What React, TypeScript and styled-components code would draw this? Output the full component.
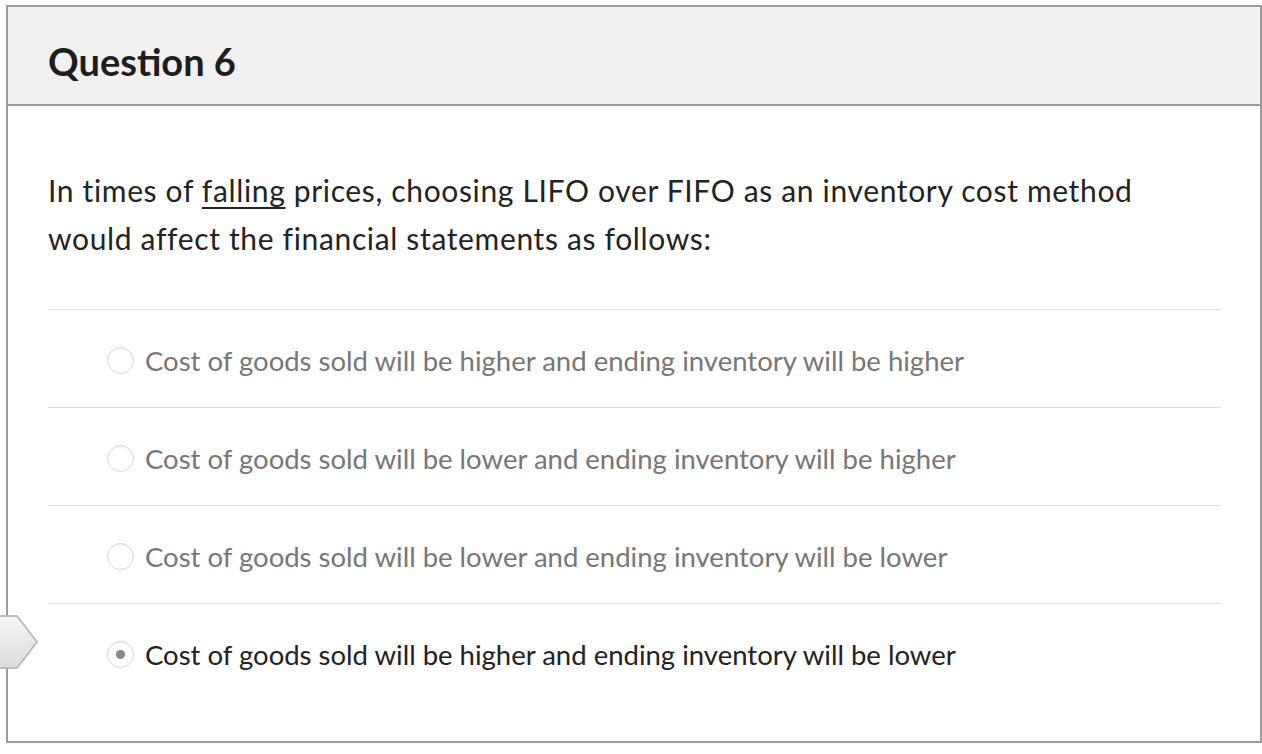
import React from 'react';
import styled, { createGlobalStyle } from 'styled-components';

const GlobalStyle = createGlobalStyle`
  body {
    margin: 0;
    background: #fff;
    font-family: Lato, "Open Sans", sans-serif;
  }
`;

const Page = styled.div`
  padding: 5px 0 0 6px;
`;

const Card = styled.div`
  box-sizing: border-box;
  width: 1256px;
  height: 738px;
  border: 2px solid #9b9b9b;
  display: flex;
  flex-direction: column;
`;

const Header = styled.div`
  box-sizing: border-box;
  height: 99px;
  display: flex;
  align-items: center;
  padding: 10px 40px 0;
  background: #f1f1f1;
  border-bottom: 2px solid #9b9b9b;
`;

const Title = styled.h2`
  margin: 0;
  font-size: 38px;
  font-weight: bold;
  color: #1e1e1e;
`;

const Body = styled.div`
  padding: 60px 39px 0 40px;
`;

const QuestionText = styled.p`
  margin: 0 0 47px;
  font-size: 30px;
  letter-spacing: 0.65px;
  line-height: 48px;
  color: #232323;

  u {
    text-decoration-thickness: 2px;
    text-underline-offset: 5px;
  }
`;

const AnswerRow = styled.label<{ $selected?: boolean }>`
  box-sizing: border-box;
  position: relative;
  height: 98px;
  display: flex;
  align-items: center;
  gap: 11px;
  padding: 4px 0 0 59px;
  border-top: 1px solid #dedede;
  font-size: 27.5px;
  color: ${(p) => (p.$selected ? '#222' : '#777')};
`;

const Radio = styled.span<{ $checked?: boolean }>`
  box-sizing: border-box;
  width: 27px;
  height: 27px;
  border-radius: 50%;
  border: 1px solid #d6d6d6;
  background: #fff;
  box-shadow: inset 0 1px 2px rgba(0, 0, 0, 0.06);
  display: flex;
  align-items: center;
  justify-content: center;

  &::after {
    content: '';
    width: 9px;
    height: 9px;
    border-radius: 50%;
    background: ${(p) => (p.$checked ? '#888' : 'transparent')};
  }
`;

const Marker = styled.svg`
  position: absolute;
  left: -48px;
  top: 11px;
`;

const answers = [
  'Cost of goods sold will be higher and ending inventory will be higher',
  'Cost of goods sold will be lower and ending inventory will be higher',
  'Cost of goods sold will be lower and ending inventory will be lower',
  'Cost of goods sold will be higher and ending inventory will be lower',
];

const selected = 3;

const App = () => {
  return (
    <Page>
      <GlobalStyle />
      <Card>
        <Header>
          <Title>Question 6</Title>
        </Header>
        <Body>
          <QuestionText>
            In times of <u>falling</u> prices, choosing LIFO over FIFO as an inventory cost method
            <br />
            would affect the financial statements as follows:
          </QuestionText>
          {answers.map((a, i) => (
            <AnswerRow key={i} $selected={i === selected}>
              {i === selected && (
                <Marker width="40" height="54" viewBox="0 0 40 54">
                  <defs>
                    <linearGradient id="mk" x1="0" y1="0" x2="0" y2="1">
                      <stop offset="0" stopColor="#f6f6f6" />
                      <stop offset="1" stopColor="#dcdcdc" />
                    </linearGradient>
                  </defs>
                  <polygon
                    points="-2,1 17,1 37,27 17,53 -2,53"
                    fill="url(#mk)"
                    stroke="#bdbdbd"
                    strokeWidth="2"
                  />
                </Marker>
              )}
              <Radio $checked={i === selected} />
              <span>{a}</span>
            </AnswerRow>
          ))}
        </Body>
      </Card>
    </Page>
  );
};

export default App;
